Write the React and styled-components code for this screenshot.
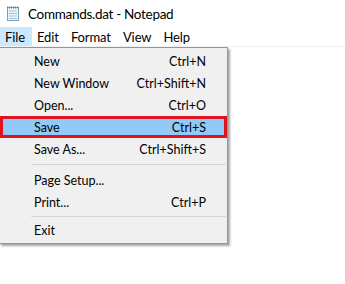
import styled, { createGlobalStyle } from "styled-components";

const GlobalStyle = createGlobalStyle`
  html, body {
    margin: 0;
    padding: 0;
    background: #ffffff;
  }
  body {
    font-family: Lato, "Open Sans", Arial, sans-serif;
    color: #000000;
  }
`;

const menuItems = [
  { label: "New", shortcut: "Ctrl+N" },
  { label: "New Window", shortcut: "Ctrl+Shift+N" },
  { label: "Open...", shortcut: "Ctrl+O" },
  { label: "Save", shortcut: "Ctrl+S", selected: true },
  { label: "Save As...", shortcut: "Ctrl+Shift+S" },
  { separator: true, gap: "4px 1px 4px 31px" },
  { label: "Page Setup..." },
  { label: "Print...", shortcut: "Ctrl+P" },
  { separator: true, gap: "3px 1px 2px 31px" },
  { label: "Exit" },
];

const NotepadIcon = () => (
  <svg width="12" height="15" viewBox="0 0 12 15">
    <rect x="0.5" y="1.5" width="11" height="13" fill="#eef6fb" stroke="#7f9db9" />
    <line x1="2" y1="5" x2="10" y2="5" stroke="#9ec3df" />
    <line x1="2" y1="7.5" x2="10" y2="7.5" stroke="#9ec3df" />
    <line x1="2" y1="10" x2="10" y2="10" stroke="#9ec3df" />
    <line x1="2" y1="12.5" x2="10" y2="12.5" stroke="#9ec3df" />
    <line x1="0" y1="1.5" x2="12" y2="1.5" stroke="#4a7fae" strokeWidth="2" strokeDasharray="1 1" />
  </svg>
);

const App = () => {
  return (
    <>
      <GlobalStyle />
      <Window>
        <TitleBar>
          <NotepadIcon />
          <Title>Commands.dat - Notepad</Title>
        </TitleBar>
        <MenuBar>
          <MenuTitle active>File</MenuTitle>
          <MenuTitle>Edit</MenuTitle>
          <MenuTitle>Format</MenuTitle>
          <MenuTitle>View</MenuTitle>
          <MenuTitle>Help</MenuTitle>
        </MenuBar>
        <Editor>
          <Dropdown>
            {menuItems.map((item, i) =>
              item.separator ? (
                <Separator key={i} gap={item.gap} />
              ) : (
                <Item key={i} selected={item.selected}>
                  <span>{item.label}</span>
                  <span>{item.shortcut}</span>
                </Item>
              )
            )}
          </Dropdown>
        </Editor>
      </Window>
    </>
  );
};

export default App;

const Window = styled.div`
  width: 345px;
  height: 284px;
  display: flex;
  flex-direction: column;
  background: #ffffff;
  overflow: hidden;
`;

const TitleBar = styled.div`
  height: 27px;
  display: flex;
  align-items: center;
  gap: 9px;
  padding: 0 0 0 7px;
  box-sizing: border-box;
  svg {
    margin-top: -1px;
  }
`;

const Title = styled.div`
  font-size: 13.5px;
  letter-spacing: -0.3px;
  line-height: 18px;
  margin-top: 1px;
`;

const MenuBar = styled.div`
  height: 20px;
  display: flex;
  align-items: stretch;
  border-bottom: 1px solid #f0f0f0;
  box-sizing: border-box;
`;

const MenuTitle = styled.div`
  display: flex;
  align-items: center;
  padding: 0 6px 0 5px;
  font-size: 13px;
  letter-spacing: -0.1px;
  background: ${(p) => (p.active ? "#cce8ff" : "transparent")};
  border-right: 1px solid ${(p) => (p.active ? "#cce8ff" : "transparent")};
`;

const Editor = styled.div`
  position: relative;
  flex: 1;
`;

const Dropdown = styled.div`
  position: absolute;
  left: -1px;
  top: 0;
  width: 229px;
  box-sizing: border-box;
  padding: 2px 0;
  background: #f0f0f0;
  border: 1px solid #979797;
  box-shadow: 2px 2px 2px rgba(0, 0, 0, 0.35);
`;

const Item = styled.div`
  height: 22px;
  display: flex;
  align-items: center;
  justify-content: space-between;
  padding: 0 21px 0 34px;
  box-sizing: border-box;
  font-size: 12.5px;
  background: ${(p) => (p.selected ? "#91c9f7" : "transparent")};
  box-shadow: ${(p) => (p.selected ? "inset 0 0 0 3px #e0141e" : "none")};
`;

const Separator = styled.div`
  height: 1px;
  margin: ${(p) => p.gap};
  background: #d7d7d7;
`;
